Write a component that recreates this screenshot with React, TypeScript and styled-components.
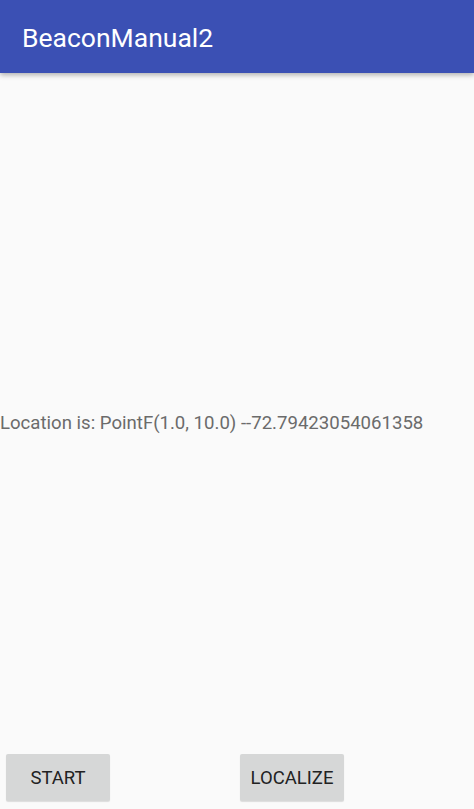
import styled, {createGlobalStyle} from "styled-components";

const GlobalStyle = createGlobalStyle`
	html, body {
		margin: 0;
		padding: 0;
		background: #fafafa;
	}
	#root {
		height: 809px;
	}
`;

const Screen = styled.div`
	display: flex;
	flex-direction: column;
	height: 809px;
	background: #fafafa;
	font-family: Roboto, "Noto Sans", sans-serif;
	overflow: hidden;
`;

const AppBar = styled.header`
	display: flex;
	align-items: center;
	height: 73px;
	padding-left: 22px;
	background: #3b50b4;
	box-shadow: 0 2px 5px rgba(0, 0, 0, 0.3);
	flex-shrink: 0;
	z-index: 1;
`;

const Title = styled.h1`
	margin: 2px 0 0 0;
	font-size: 26.5px;
	font-weight: 400;
	color: #ffffff;
	letter-spacing: 0;
`;

const Content = styled.main`
	flex: 1;
	display: flex;
	align-items: center;
	padding-top: 18px;
`;

const Location = styled.p`
	margin: 0;
	font-size: 18.6px;
	line-height: 24px;
	color: #6b6b6b;
	white-space: nowrap;
`;

const ButtonRow = styled.div`
	display: flex;
	gap: 130px;
	padding: 0 0 8px 6px;
`;

const Button = styled.button`
	width: 104px;
	height: 47px;
	border: none;
	border-radius: 2px;
	background: #d6d7d7;
	box-shadow: 0 1px 1px rgba(0, 0, 0, 0.12);
	font-family: Roboto, "Noto Sans", sans-serif;
	font-size: 18.5px;
	font-weight: 400;
	color: #222222;
	text-transform: uppercase;
	padding: 0;
`;

export default function App() {
	return (
		<>
			<GlobalStyle/>
			<Screen>
				<AppBar>
					<Title>BeaconManual2</Title>
				</AppBar>
				<Content>
					<Location>Location is: PointF(1.0, 10.0) --72.79423054061358</Location>
				</Content>
				<ButtonRow>
					<Button>Start</Button>
					<Button>Localize</Button>
				</ButtonRow>
			</Screen>
		</>
	);
}
